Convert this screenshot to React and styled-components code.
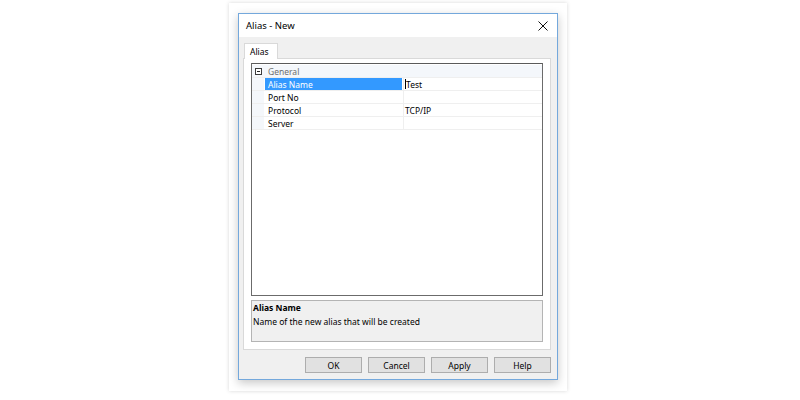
import React from 'react';
import styled, { createGlobalStyle } from 'styled-components';

const GlobalStyle = createGlobalStyle`
  html, body {
    margin: 0;
    padding: 0;
    background: #ffffff;
  }
  body {
    font-family: 'Noto Sans', 'Open Sans', sans-serif;
    font-size: 8.5px;
    color: #000;
  }
`;

const Page = styled.div`
  width: 800px;
  height: 400px;
  box-sizing: border-box;
  padding: 3px 0 0 229px;
`;

const Frame = styled.div`
  width: 338px;
  height: 388px;
  box-sizing: border-box;
  padding: 10px 10px 12px 9px;
  background: #ffffff;
  box-shadow: 0 0 4px rgba(0, 0, 0, 0.16);
`;

const Dialog = styled.div`
  width: 320px;
  height: 367px;
  box-sizing: border-box;
  border: 1px solid #74a8dc;
  background: #f0f0f0;
  display: flex;
  flex-direction: column;
  box-shadow: 0 3px 9px rgba(0, 0, 0, 0.22);
`;

const TitleBar = styled.div`
  height: 23px;
  background: #ffffff;
  display: flex;
  align-items: center;
  justify-content: space-between;
  padding: 0 8px 0 7px;
  font-size: 9.5px;
`;

const CloseButton = styled.div`
  width: 12px;
  height: 12px;
  display: flex;
  align-items: center;
  justify-content: center;
`;

const Body = styled.div`
  flex: 1;
  display: flex;
  flex-direction: column;
  padding: 6px 6px 6px 4px;
`;

const TabStrip = styled.div`
  display: flex;
  padding-left: 1px;
  height: 15px;
  position: relative;
  z-index: 1;
`;

const Tab = styled.div`
  width: 34px;
  box-sizing: border-box;
  border: 1px solid #d9d9d9;
  border-bottom: none;
  background: #ffffff;
  display: flex;
  align-items: center;
  padding-left: 5px;
  height: 16px;
`;

const Panel = styled.div`
  height: 292px;
  box-sizing: border-box;
  border: 1px solid #d9d9d9;
  background: #ffffff;
  display: flex;
  flex-direction: column;
  gap: 4px;
  padding: 4px 7px 7px 7px;
`;

const Grid = styled.div`
  height: 234px;
  box-sizing: border-box;
  border: 1px solid #6b6b6b;
  border-top-color: #5a5a5a;
  background: #ffffff;
  display: flex;
  flex-direction: column;
  padding-top: 1px;
`;

const Row = styled.div`
  display: grid;
  grid-template-columns: 12px 138px 1fr;
  height: 13px;
  box-sizing: border-box;
  border-bottom: 1px solid #efefef;
  background: ${(p) => (p.$category ? '#f4f7fb' : '#ffffff')};
`;

const Gutter = styled.div`
  background: #f4f7fb;
  display: flex;
  align-items: center;
  justify-content: center;
`;

const Toggle = styled.div`
  width: 7px;
  height: 7px;
  box-sizing: border-box;
  border: 1px solid #3c3c3c;
  background: #fff;
  display: flex;
  align-items: center;
  justify-content: center;
  &::after {
    content: '';
    width: 3px;
    height: 1px;
    background: #222;
  }
`;

const Name = styled.div`
  display: flex;
  align-items: center;
  padding-left: 3px;
  margin-left: 1px;
  color: ${(p) => (p.$selected ? '#ffffff' : p.$category ? '#6d6d6d' : '#000000')};
  background: ${(p) => (p.$selected ? '#3399ff' : 'transparent')};
  white-space: nowrap;
`;

const Value = styled.div`
  display: flex;
  align-items: center;
  padding-left: 1px;
  border-left: 1px solid ${(p) => (p.$category ? 'transparent' : '#efefef')};
  margin-left: 1px;
`;

const Caret = styled.span`
  width: 1px;
  height: 10px;
  background: #000;
`;

const Description = styled.div`
  height: 42px;
  box-sizing: border-box;
  border: 1px solid #b4b4b4;
  background: #f0f0f0;
  padding: 1px 0 0 1px;
  display: flex;
  flex-direction: column;
  gap: 2px;
`;

const DescTitle = styled.div`
  font-weight: bold;
  line-height: 12px;
`;

const DescText = styled.div`
  line-height: 12px;
`;

const ButtonRow = styled.div`
  display: flex;
  justify-content: flex-end;
  gap: 6px;
  margin-top: 7px;
`;

const Button = styled.div`
  width: 57px;
  height: 16px;
  box-sizing: border-box;
  border: 1px solid #adadad;
  background: #e1e1e1;
  display: flex;
  align-items: center;
  justify-content: center;
  padding-top: 1px;
`;

const properties = [
  { name: 'Alias Name', value: 'Test', selected: true },
  { name: 'Port No', value: '' },
  { name: 'Protocol', value: 'TCP/IP' },
  { name: 'Server', value: '' },
];

export default function App() {
  return (
    <Page>
      <GlobalStyle />
      <Frame>
        <Dialog>
          <TitleBar>
            <span>Alias - New</span>
            <CloseButton>
              <svg width="10" height="10" viewBox="0 0 10 10">
                <path d="M0.5 0.5 L9.5 9.5 M9.5 0.5 L0.5 9.5" stroke="#111" strokeWidth="1" />
              </svg>
            </CloseButton>
          </TitleBar>
          <Body>
            <TabStrip>
              <Tab>Alias</Tab>
            </TabStrip>
            <Panel>
              <Grid>
                <Row $category>
                  <Gutter>
                    <Toggle />
                  </Gutter>
                  <Name $category>General</Name>
                  <Value $category />
                </Row>
                {properties.map((p) => (
                  <Row key={p.name}>
                    <Gutter />
                    <Name $selected={p.selected}>{p.name}</Name>
                    <Value>
                      {p.selected && <Caret />}
                      {p.value}
                    </Value>
                  </Row>
                ))}
              </Grid>
              <Description>
                <DescTitle>Alias Name</DescTitle>
                <DescText>Name of the new alias that will be created</DescText>
              </Description>
            </Panel>
            <ButtonRow>
              <Button>OK</Button>
              <Button>Cancel</Button>
              <Button>Apply</Button>
              <Button>Help</Button>
            </ButtonRow>
          </Body>
        </Dialog>
      </Frame>
    </Page>
  );
}
